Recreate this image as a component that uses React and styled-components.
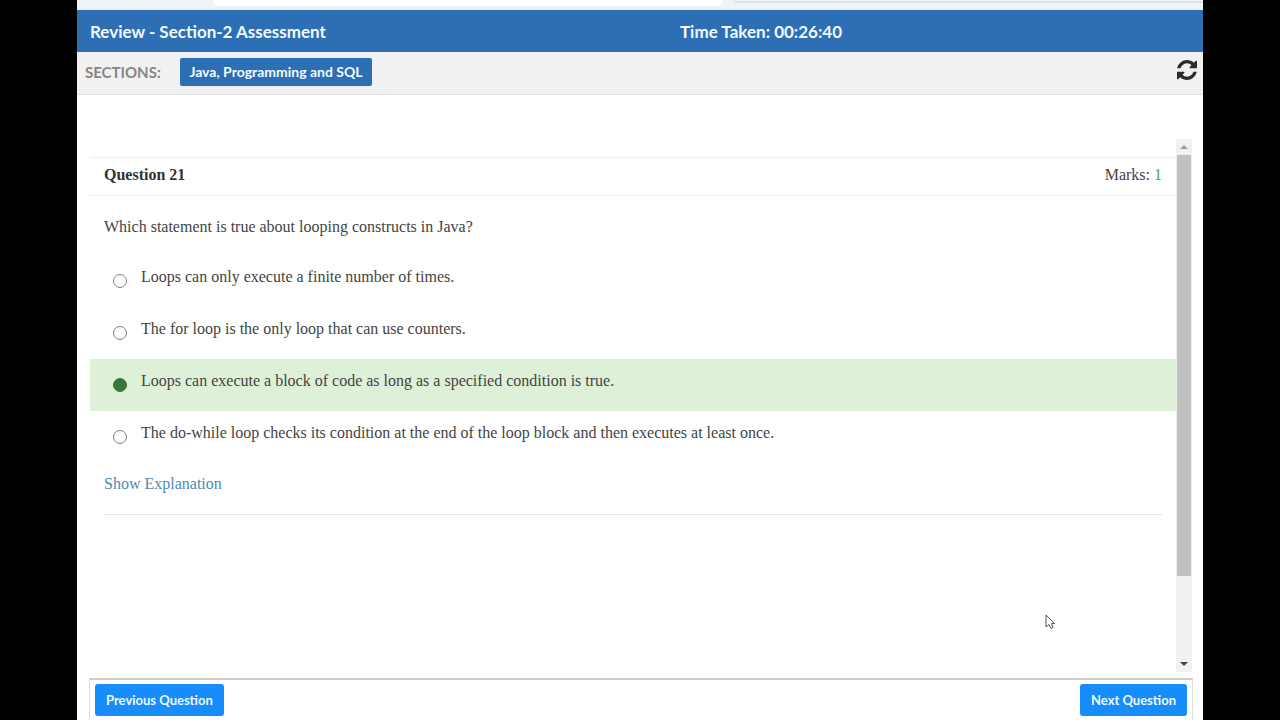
import React, { useState } from 'react';
import styled, { createGlobalStyle } from 'styled-components';

const GlobalStyle = createGlobalStyle`
  * {
    box-sizing: border-box;
  }
  body {
    margin: 0;
    background: #000;
    font-family: Lato, "Open Sans", sans-serif;
  }
`

const Screen = styled.div`
  display: flex;
  flex-direction: column;
  min-height: 100vh;
  margin: 0 77px;
  background: #fff;
`

const BrowserStrip = styled.div`
  display: flex;
  height: 10px;
  background: #eff3f8;
  border-bottom: 1px solid #e4f1f8;
`

const BrowserTab = styled.div`
  flex: 0 1 510px;
  height: 6px;
  margin-left: 136px;
  background: #fff;
  border-radius: 0 0 6px 6px;
`

const AddressBar = styled.div`
  flex: 1;
  height: 3px;
  margin-left: 10px;
  border-bottom: 2px solid #dfe1e6;
  border-radius: 0 0 0 4px;
`

const Header = styled.header`
  display: grid;
  grid-template-columns: 59fr 51fr;
  align-items: center;
  height: 42px;
  padding: 2px 13px 0;
  background: #2e6eb5;
  color: #f1fbff;
`

const Title = styled.h1`
  margin: 0;
  font-size: 17px;
  font-weight: 700;
  line-height: 24px;
`

const Timer = styled.div`
  font-size: 17px;
  font-weight: 700;
  line-height: 24px;
`

const SectionBar = styled.nav`
  display: flex;
  align-items: center;
  height: 43px;
  padding: 0 6px 2px 8px;
  background: #f1f1f1;
  border-bottom: 1px solid #e2e2e2;
`

const SectionLabel = styled.span`
  width: 95px;
  color: #868686;
  font-size: 15px;
  font-weight: 700;
`

const SectionButton = styled.button`
  width: 192px;
  height: 28px;
  padding: 0 0 2px;
  border: 0;
  border-radius: 2px;
  background: #2e6eb5;
  color: #f1fbff;
  font-family: inherit;
  font-size: 14px;
  font-weight: 700;
`

const RefreshButton = styled.button`
  display: flex;
  margin-left: auto;
  padding: 0 0 4px;
  border: 0;
  background: none;
  color: #2b2b2b;
`

const Content = styled.main`
  display: flex;
  flex: 1;
  margin: 44px 11px 6px 13px;
`

const QuestionPanel = styled.section`
  flex: 1;
  padding-top: 18px;
  color: #444;
  font-family: "Liberation Serif", "Times New Roman", serif;
  font-size: 16px;
  line-height: 20px;
`

const QuestionHead = styled.div`
  display: flex;
  align-items: center;
  justify-content: space-between;
  height: 39px;
  padding: 0 14px 4px;
  border-top: 1px solid #ececec;
  border-bottom: 1px solid #f0f0f0;
`

const QuestionNumber = styled.h2`
  margin: 0;
  color: #333;
  font-size: 16px;
`

const Marks = styled.span`
  b {
    color: #4fa457;
    font-weight: 400;
  }
`

const Options = styled.fieldset`
  margin: 0;
  padding: 0;
  border: 0;
`

const QuestionText = styled.legend`
  height: 59px;
  padding: 21px 14px 18px;
`

const Option = styled.label`
  display: flex;
  align-items: center;
  gap: 14px;
  height: 52px;
  padding: 0 23px;
  background: ${props => (props.$correct ? '#dff0d8' : 'transparent')};
`

const Radio = styled.input`
  appearance: none;
  flex: none;
  width: 14px;
  height: 14px;
  margin: 0;
  border: 1px solid #808080;
  border-radius: 50%;
  background: #fff;
  &:checked {
    border-color: #3c763d;
    background: #3c763d;
  }
`

const OptionText = styled.span`
  padding-bottom: 8px;
`

const Explanation = styled.div`
  margin: 0 14px;
  padding: 11px 0 20px;
  border-bottom: 1px solid #e6e6e6;
  a {
    color: #4a8db5;
    text-decoration: none;
  }
`

const ScrollBar = styled.div`
  display: flex;
  flex-direction: column;
  width: 16px;
  background: #f1f1f1;
`

const ScrollArrow = styled.div`
  display: flex;
  align-items: center;
  justify-content: center;
  height: 16px;
  color: ${props => props.$color};
`

const ScrollTrack = styled.div`
  display: flex;
  flex-direction: column;
  flex: 1;
  padding: 0 1px;
`

const ScrollThumb = styled.div`
  height: 84%;
  background: #c1c1c1;
`

const Footer = styled.footer`
  display: flex;
  justify-content: space-between;
  height: 42px;
  margin: 0 10px 0 12px;
  padding: 4px 5px;
  border: 1px solid #dcdcdc;
  border-top: 2px solid #ccc;
  border-bottom: 0;
`

const NavButton = styled.button`
  height: 32px;
  padding: 0 11px 1px;
  border: 0;
  border-radius: 3px;
  background: #168dfb;
  color: #f1fbff;
  font-family: inherit;
  font-size: 13px;
  font-weight: 700;
`

const Pointer = styled.svg`
  position: absolute;
  left: 1045px;
  top: 614px;
`

const RefreshIcon = () => (
  <svg width="20" height="20" viewBox="0 0 1536 1536" fill="currentColor" aria-hidden="true">
    <path d="M1511 928q0 5-1 7-64 268-268 434.5t-478 166.5q-146 0-282.5-55t-243.5-157l-129 129q-19 19-45 19t-45-19-19-45v-448q0-26 19-45t45-19h448q26 0 45 19t19 45-19 45l-137 137q71 66 161 102t187 36q134 0 250-65t186-179q11-17 53-117 8-23 30-23h192q13 0 22.5 9.5t9.5 22.5zm25-800v448q0 26-19 45t-45 19h-448q-26 0-45-19t-19-45 19-45l138-138q-148-137-349-137-134 0-250 65t-186 179q-11 17-53 117-8 23-30 23h-199q-13 0-22.5-9.5t-9.5-22.5v-7q65-268 270-434.5t480-166.5q146 0 284 55.5t245 156.5l130-129q19-19 45-19t45 19 19 45z" />
  </svg>
)

const options = [
  { id: 'a', text: 'Loops can only execute a finite number of times.' },
  { id: 'b', text: 'The for loop is the only loop that can use counters.' },
  { id: 'c', text: 'Loops can execute a block of code as long as a specified condition is true.', correct: true },
  { id: 'd', text: 'The do-while loop checks its condition at the end of the loop block and then executes at least once.' },
]

const App = () => {
  const [selected, setSelected] = useState('c')

  return (
    <>
      <GlobalStyle />
      <Screen>
        <BrowserStrip>
          <BrowserTab />
          <AddressBar />
        </BrowserStrip>
        <Header>
          <Title>Review - Section-2 Assessment</Title>
          <Timer>Time Taken: 00:26:40</Timer>
        </Header>
        <SectionBar>
          <SectionLabel>SECTIONS:</SectionLabel>
          <SectionButton type="button">Java, Programming and SQL</SectionButton>
          <RefreshButton type="button" aria-label="Refresh">
            <RefreshIcon />
          </RefreshButton>
        </SectionBar>
        <Content>
          <QuestionPanel>
            <QuestionHead>
              <QuestionNumber>Question 21</QuestionNumber>
              <Marks>Marks: <b>1</b></Marks>
            </QuestionHead>
            <Options>
              <QuestionText>Which statement is true about looping constructs in Java?</QuestionText>
              {options.map(option => (
                <Option key={option.id} htmlFor={option.id} $correct={option.correct}>
                  <Radio
                    type="radio"
                    name="answer"
                    id={option.id}
                    checked={selected === option.id}
                    onChange={() => setSelected(option.id)}
                  />
                  <OptionText>{option.text}</OptionText>
                </Option>
              ))}
            </Options>
            <Explanation>
              <a href="#explanation">Show Explanation</a>
            </Explanation>
          </QuestionPanel>
          <ScrollBar aria-hidden="true">
            <ScrollArrow $color="#a0a0a0">
              <svg width="8" height="4" viewBox="0 0 8 4" fill="currentColor"><path d="M0 4L4 0L8 4Z" /></svg>
            </ScrollArrow>
            <ScrollTrack>
              <ScrollThumb />
            </ScrollTrack>
            <ScrollArrow $color="#444">
              <svg width="8" height="4" viewBox="0 0 8 4" fill="currentColor"><path d="M0 0L4 4L8 0Z" /></svg>
            </ScrollArrow>
          </ScrollBar>
        </Content>
        <Footer>
          <NavButton type="button">Previous Question</NavButton>
          <NavButton type="button">Next Question</NavButton>
        </Footer>
      </Screen>
      <Pointer width="11" height="16" viewBox="0 0 11 16" aria-hidden="true">
        <path d="M1 1V13L4 10.5L6 14.5L8 13.5L6.5 9.5H9.5Z" fill="#fff" stroke="#555" strokeWidth="1" strokeLinejoin="round" />
      </Pointer>
    </>
  );
}

export default App
